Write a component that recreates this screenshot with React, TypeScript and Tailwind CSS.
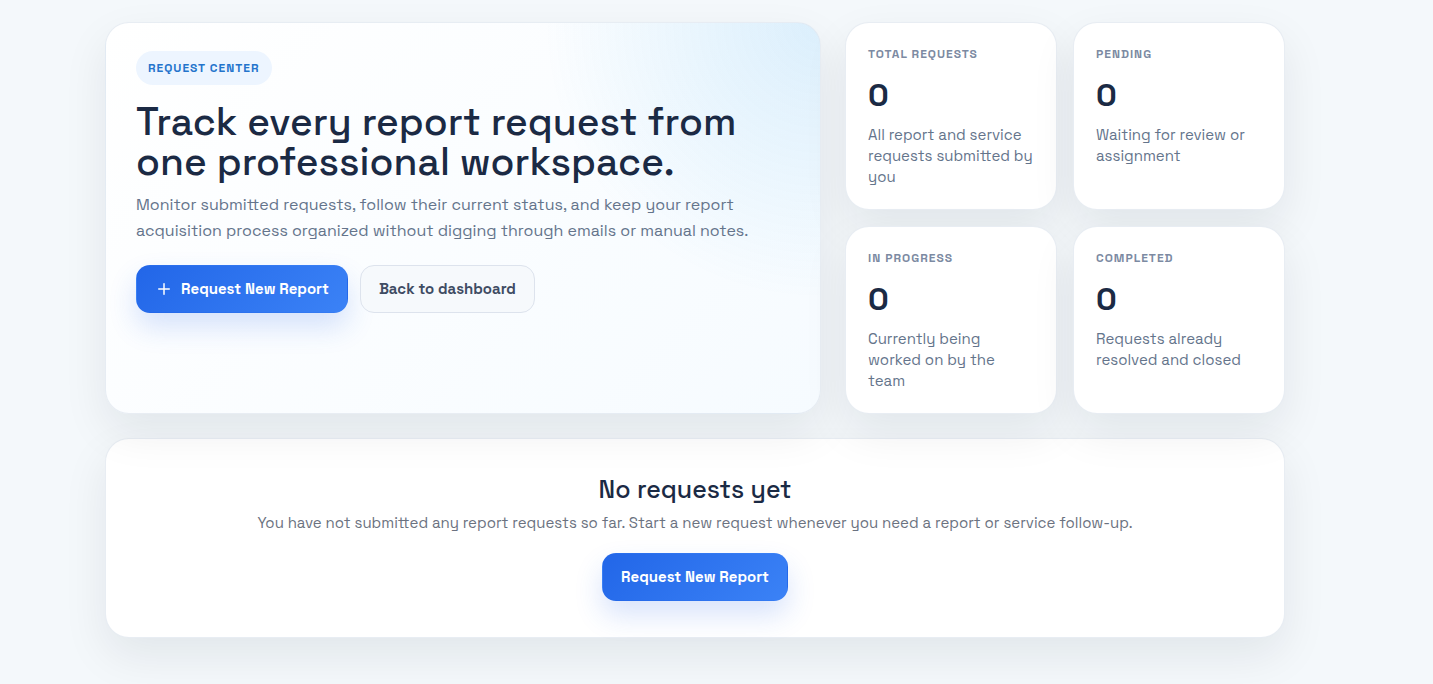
import { clsx } from "clsx";
import { Plus } from "lucide-react";

const stats = [
  { label: "Total requests", value: 0, note: "All report and service requests submitted by you" },
  { label: "Pending", value: 0, note: "Waiting for review or assignment" },
  { label: "In progress", value: 0, note: "Currently being worked on by the team" },
  { label: "Completed", value: 0, note: "Requests already resolved and closed" },
];

const card = "rounded-3xl border border-[#e2e8f0]/80 shadow-[0_18px_45px_rgba(15,23,42,0.08)]";

const PrimaryLink = ({ icon = false }: { icon?: boolean }) => (
  <a
    href="#new"
    className="inline-flex h-12 items-center gap-2 rounded-[14px] border border-transparent bg-linear-135 from-[#2266e8] to-[#3b82f6] px-[18px] text-[15px] font-bold text-white shadow-[0_14px_28px_rgba(37,99,235,0.18)]"
  >
    {icon && <Plus className="h-[18px] w-[18px]" strokeWidth={2} aria-hidden="true" />}
    Request New Report
  </a>
);

export default function App() {
  return (
    <div className="min-h-screen bg-[#f4f8fb] pr-[43px] font-['Space_Grotesk','Inter',sans-serif]">
      <main className="mx-auto max-w-[1180px] pt-[22px] pb-[46px]">
        <section className="grid gap-6 lg:grid-cols-[179fr_110fr]">
          <div
            className={clsx(
              card,
              "bg-[radial-gradient(circle_at_top_right,rgba(14,150,233,0.13),transparent_34%),linear-gradient(135deg,#ffffff_0%,#f6fbff_100%)] px-[30px] py-7"
            )}
          >
            <span className="inline-flex h-[34px] items-center rounded-full bg-[#edf5ff] px-3 text-xs font-semibold tracking-[1px] text-[#2474cc] uppercase">
              Request center
            </span>
            <h1 className="mt-[17px] max-w-[640px] text-[39px] leading-10 font-medium text-[#1b2a44]">
              Track every report request from one professional workspace.
            </h1>
            <p className="mt-[10px] max-w-[640px] text-base leading-[26px] text-[#64748b]">
              Monitor submitted requests, follow their current status, and keep your report acquisition process
              organized without digging through emails or manual notes.
            </p>
            <div className="mt-[21px] flex flex-wrap gap-3">
              <PrimaryLink icon />
              <a
                href="#dashboard"
                className="inline-flex h-12 items-center rounded-[14px] border border-[#dde3ed] bg-[#f6f9fc] px-[18px] text-[15px] font-semibold text-[#3f4c63]"
              >
                Back to dashboard
              </a>
            </div>
          </div>

          <div className="grid grid-cols-2 gap-4">
            {stats.map((stat) => (
              <div key={stat.label} className={clsx(card, "bg-white p-[22px]")}>
                <div className="text-xs leading-[18px] font-semibold tracking-[1px] text-[#7c8aa2] uppercase">
                  {stat.label}
                </div>
                <div className="mt-4 text-[32px] leading-8 font-semibold text-[#1b2a44]">{stat.value}</div>
                <p className="mt-[13px] text-[15px] leading-[21px] text-[#64748b]">{stat.note}</p>
              </div>
            ))}
          </div>
        </section>

        <section className={clsx(card, "mt-6 flex flex-col items-center bg-white px-6 pt-[35px] pb-9 text-center")}>
          <h2 className="text-[25px] leading-[30px] font-medium text-[#1b2a44]">No requests yet</h2>
          <p className="mt-2 mb-5 text-[15px] leading-[21px] text-[#6b7280]">
            You have not submitted any report requests so far. Start a new request whenever you need a report or
            service follow-up.
          </p>
          <PrimaryLink />
        </section>
      </main>
    </div>
  );
}
